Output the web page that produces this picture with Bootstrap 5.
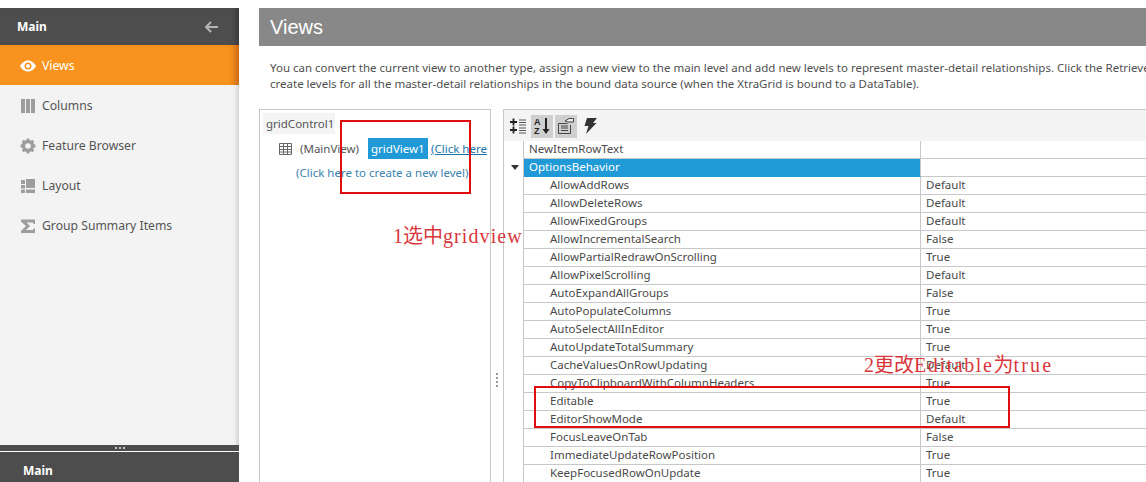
<!DOCTYPE html>
<html lang="en"><head><meta charset="utf-8"><title>Views</title>
<link href="https://cdn.jsdelivr.net/npm/bootstrap@5.3.0/dist/css/bootstrap.min.css" rel="stylesheet">
<style>
html,body{height:482px;overflow:hidden;background:#fff}
body{font-family:"Noto Sans","Open Sans",sans-serif;font-size:11.5px;color:#4a4a4a;position:relative}
.shell{height:482px;padding-top:8px}
.side{width:239px;flex:none;background:#f3f3f3;position:relative;height:474px;box-shadow:inset -5px 0 4px -3px rgba(0,0,0,.16);font-size:12px}
.side-head{height:37px;background:#4d4d4d;color:#fff;font-weight:700;padding:0 21px 0 17px;box-shadow:inset -6px 0 5px -3px rgba(0,0,0,.25)}
.side-item{height:40px;padding:2px 0 0 20px;gap:6px;color:#555;font-size:12.2px}
.side-item svg{width:16px;height:16px;flex:none}
.side-item.on{background:#f7931e;color:#fff;box-shadow:inset -8px 0 6px -4px rgba(170,70,20,.55)}
.side-foot{position:absolute;left:0;right:0;bottom:0;height:37px;background:#4d4d4d;color:#fff;font-weight:700}
.grip{height:6px;gap:2px}
.grip i{width:2px;height:2px;background:#c8c8c8;display:block}
.foot-line{height:1px;background:#fff}
.foot-title{padding:10px 0 0 23px}
.work{flex:1;min-width:0;padding-left:20px;overflow:hidden}
.title-bar{height:38px;background:#888;color:#fff;font-family:"Liberation Sans",sans-serif;font-size:20px;padding-left:11px;line-height:39px}
.intro{padding:14px 0 0 11px;height:63px;line-height:16px;white-space:nowrap;color:#505050;margin-bottom:0}
.panes{gap:12px;height:373px}
.tree{width:232px;flex:none;border:1px solid #c8c8c8;border-bottom:0;padding:3px;color:#555;overflow:hidden}
.tree-root{display:inline-block;background:#f4f4f4;padding:0 3px;height:21px;line-height:21px;width:72px;vertical-align:top}
.tree-row{padding:4px 0 0 16px;height:25px;white-space:nowrap}
.tree-row svg{width:13px;height:12px;flex:none;margin-right:8px}
.sel{background:#1f9ad6;color:#fff;padding:0 3px;height:21px;line-height:21px;width:60px;margin:0 3px 0 9px;flex:none}
.lnk{color:#1b75a8;text-decoration:underline}
.lnk2{color:#3b83ad;padding:5px 0 0 33px;white-space:nowrap}
.grid{flex:1;min-width:0;border:1px solid #c8c8c8;border-bottom:0;border-right:0;overflow:hidden}
.bar{height:31px;background:#f4f4f4;padding:1px 0 0 3px;gap:0}
.tb{height:23px;width:22px;display:flex;align-items:center;justify-content:center;margin-right:2px}
.tb.act{background:#cfcfcf}
.tb svg{width:18px;height:18px}
.prow{height:18px;line-height:16px;white-space:nowrap}
.gut{width:20px;flex:none;background:#fff;border-right:1px solid #c8c8c8}
.pname{width:397px;flex:none;border-right:1px solid #c8c8c8;border-bottom:1px solid #c8c8c8;padding-left:26px;overflow:hidden}
.pname.top{padding-left:5px}
.pval{flex:1;border-bottom:1px solid #c8c8c8;padding-left:5px}
.prow.head .pname{background:#1f9ad6;color:#fff;border-bottom-color:#1f9ad6;padding-left:5px}
.caret{width:0;height:0;border:4px solid transparent;border-top:5px solid #333;border-bottom:0;margin:6px 0 0 7px;display:block}
.mark-box{position:absolute;border:2px solid #e00f0f;pointer-events:none}
.note{position:absolute;color:#d8383c;font-family:"Liberation Serif",serif;font-size:20px;line-height:20px;white-space:nowrap}
.note b{font-family:"Noto Sans CJK SC",sans-serif;font-size:20px;font-weight:400}
.sp1{letter-spacing:1.1px}
.sp2{letter-spacing:1.6px}
.sp3{letter-spacing:2.2px}
.dots{position:absolute;left:496px;top:373px;width:0;height:14px;border-left:2px dotted #999}
</style></head><body>
<div class="shell d-flex">
<aside class="side">
 <div class="side-head d-flex align-items-center justify-content-between"><span>Main</span>
  <svg width="14" height="12" viewBox="0 0 14 12" fill="none" stroke="#b5b5b5" stroke-width="2"><path d="M14 6H2M7 1 2 6l5 5"/></svg></div>
 <div class="side-item on d-flex align-items-center">
  <svg viewBox="0 0 16 16"><path fill="#fff" d="M8 2.500C4.500 2.500 1.500 5 0 8c1.500 3 4.500 5.500 8 5.500S14.500 11 16 8c-1.500-3-4.500-5.500-8-5.500z"/><circle cx="8" cy="8" r="3.500" fill="#f7931e"/><circle cx="8" cy="8" r="2" fill="#fff"/></svg><span>Views</span></div>
 <div class="side-item d-flex align-items-center">
  <svg viewBox="0 0 16 16" fill="#9d9d9d"><path d="M1 1h4v14H1zM6 1h4v14H6zM11 1h4v14h-4z"/></svg><span>Columns</span></div>
 <div class="side-item d-flex align-items-center">
  <svg viewBox="0 0 16 16"><circle cx="8" cy="8" r="4.500" fill="none" stroke="#9d9d9d" stroke-width="3.400"/><path stroke="#9d9d9d" stroke-width="2.800" d="M8 .5v3M8 12.500v3M.5 8h3M12.500 8h3M2.700 2.700l2.100 2.100M11.200 11.200l2.100 2.100M13.300 2.700l-2.100 2.100M4.800 11.200l-2.100 2.100"/></svg><span>Feature Browser</span></div>
 <div class="side-item d-flex align-items-center">
  <svg viewBox="0 0 16 16" fill="#9d9d9d"><path d="M1 2h4v4H1zM1 7h4v3.500H1zM1 11.500h4V15H1zM6 1h9v9H6zM6 11.500h9V15H6z"/></svg><span>Layout</span></div>
 <div class="side-item d-flex align-items-center">
  <svg viewBox="0 0 16 16" fill="#9d9d9d"><path d="M1 1.500h14V6h-1.500L13 4.500H6.500L10 8l-4 4H13l.5-1.500H15v4.500H1v-2L6 8 1 3.500z"/></svg><span>Group Summary Items</span></div>
 <div class="side-foot">
  <div class="grip d-flex align-items-center justify-content-center"><i></i><i></i><i></i></div>
  <div class="foot-line"></div>
  <div class="foot-title">Main</div>
 </div>
</aside>
<main class="work">
 <div class="title-bar">Views</div>
 <p class="intro">You can convert the current view to another type, assign a new view to the main level and add new levels to represent master-detail relationships. Click the Retrieve Details button to<br>create levels for all the master-detail relationships in the bound data source (when the XtraGrid is bound to a DataTable).</p>
 <div class="panes d-flex">
  <section class="tree">
   <div class="tree-root">gridControl1</div>
   <div class="tree-row d-flex align-items-center">
    <svg viewBox="0 0 13 12" fill="none" stroke="#666"><path d="M.5.500h12v11H.5zM.5 3.500h12M.5 6.500h12M.5 9h12M4.500 .5v11M8.500 .5v11"/></svg>
    <span>(MainView)</span><span class="sel">gridView1</span><span class="lnk">(Click here</span></div>
   <div class="lnk2">(Click here to create a new level)</div>
  </section>
  <section class="grid">
   <div class="bar d-flex align-items-center">
    <div class="tb"><svg viewBox="0 0 18 18"><path stroke="#222" stroke-width="1.800" d="M1 5h7M4.500 1.500v7M1 13h7M4.500 9.500v7"/><path stroke="#555" d="M10 3h7M10 5.500h7M10 8h7M10 11h7M10 13.500h7M10 16h7"/></svg></div>
    <div class="tb act"><svg viewBox="0 0 18 18"><text x="1" y="8" font-family="Liberation Sans,sans-serif" font-size="9" font-weight="700" fill="#222">A</text><text x="1" y="17" font-family="Liberation Sans,sans-serif" font-size="9" font-weight="700" fill="#222">Z</text><path stroke="#222" stroke-width="2" fill="none" d="M13 1v14"/><path fill="#222" d="M9.500 12h7L13 17z"/></svg></div>
    <div class="tb act"><svg viewBox="0 0 18 18" fill="none" stroke="#444"><path d="M1.500 6.500h9M1.500 6.500v10h12V8"/><path d="M4 9h7M4 11h7M4 13.500h7"/><path d="M8 4l4-2.500h4.500v3.500H11z" fill="#eee"/></svg></div>
    <div class="tb"><svg viewBox="0 0 18 18"><path fill="#333" d="M6 1h10l-4 5h3.500L5 17l2.500-8H3.500z"/></svg></div>
   </div>
   <div class="prow d-flex"><div class="gut"></div><div class="pname top">NewItemRowText</div><div class="pval"></div></div>
   <div class="prow head d-flex"><div class="gut"><span class="caret"></span></div><div class="pname">OptionsBehavior</div><div class="pval"></div></div>
   <div class="prow d-flex"><div class="gut"></div><div class="pname">AllowAddRows</div><div class="pval">Default</div></div>
   <div class="prow d-flex"><div class="gut"></div><div class="pname">AllowDeleteRows</div><div class="pval">Default</div></div>
   <div class="prow d-flex"><div class="gut"></div><div class="pname">AllowFixedGroups</div><div class="pval">Default</div></div>
   <div class="prow d-flex"><div class="gut"></div><div class="pname">AllowIncrementalSearch</div><div class="pval">False</div></div>
   <div class="prow d-flex"><div class="gut"></div><div class="pname">AllowPartialRedrawOnScrolling</div><div class="pval">True</div></div>
   <div class="prow d-flex"><div class="gut"></div><div class="pname">AllowPixelScrolling</div><div class="pval">Default</div></div>
   <div class="prow d-flex"><div class="gut"></div><div class="pname">AutoExpandAllGroups</div><div class="pval">False</div></div>
   <div class="prow d-flex"><div class="gut"></div><div class="pname">AutoPopulateColumns</div><div class="pval">True</div></div>
   <div class="prow d-flex"><div class="gut"></div><div class="pname">AutoSelectAllInEditor</div><div class="pval">True</div></div>
   <div class="prow d-flex"><div class="gut"></div><div class="pname">AutoUpdateTotalSummary</div><div class="pval">True</div></div>
   <div class="prow d-flex"><div class="gut"></div><div class="pname">CacheValuesOnRowUpdating</div><div class="pval">Default</div></div>
   <div class="prow d-flex"><div class="gut"></div><div class="pname">CopyToClipboardWithColumnHeaders</div><div class="pval">True</div></div>
   <div class="prow d-flex"><div class="gut"></div><div class="pname">Editable</div><div class="pval">True</div></div>
   <div class="prow d-flex"><div class="gut"></div><div class="pname">EditorShowMode</div><div class="pval">Default</div></div>
   <div class="prow d-flex"><div class="gut"></div><div class="pname">FocusLeaveOnTab</div><div class="pval">False</div></div>
   <div class="prow d-flex"><div class="gut"></div><div class="pname">ImmediateUpdateRowPosition</div><div class="pval">True</div></div>
   <div class="prow d-flex"><div class="gut"></div><div class="pname">KeepFocusedRowOnUpdate</div><div class="pval">True</div></div>
  </section>
 </div>
</main>
</div>
<div class="dots"></div>
<div class="mark-box" style="left:340px;top:120px;width:131px;height:74px"></div>
<div class="mark-box" style="left:534px;top:386px;width:476px;height:42px"></div>
<div class="note" style="left:393px;top:225px">1<b>选中</b><span class="sp1">gridview</span></div>
<div class="note" style="left:864px;top:354px">2<b>更改</b><span class="sp2">Editable</span><b>为</b><span class="sp3">true</span></div>
<script src="https://cdn.jsdelivr.net/npm/bootstrap@5.3.0/dist/js/bootstrap.bundle.min.js"></script>
</body></html>
